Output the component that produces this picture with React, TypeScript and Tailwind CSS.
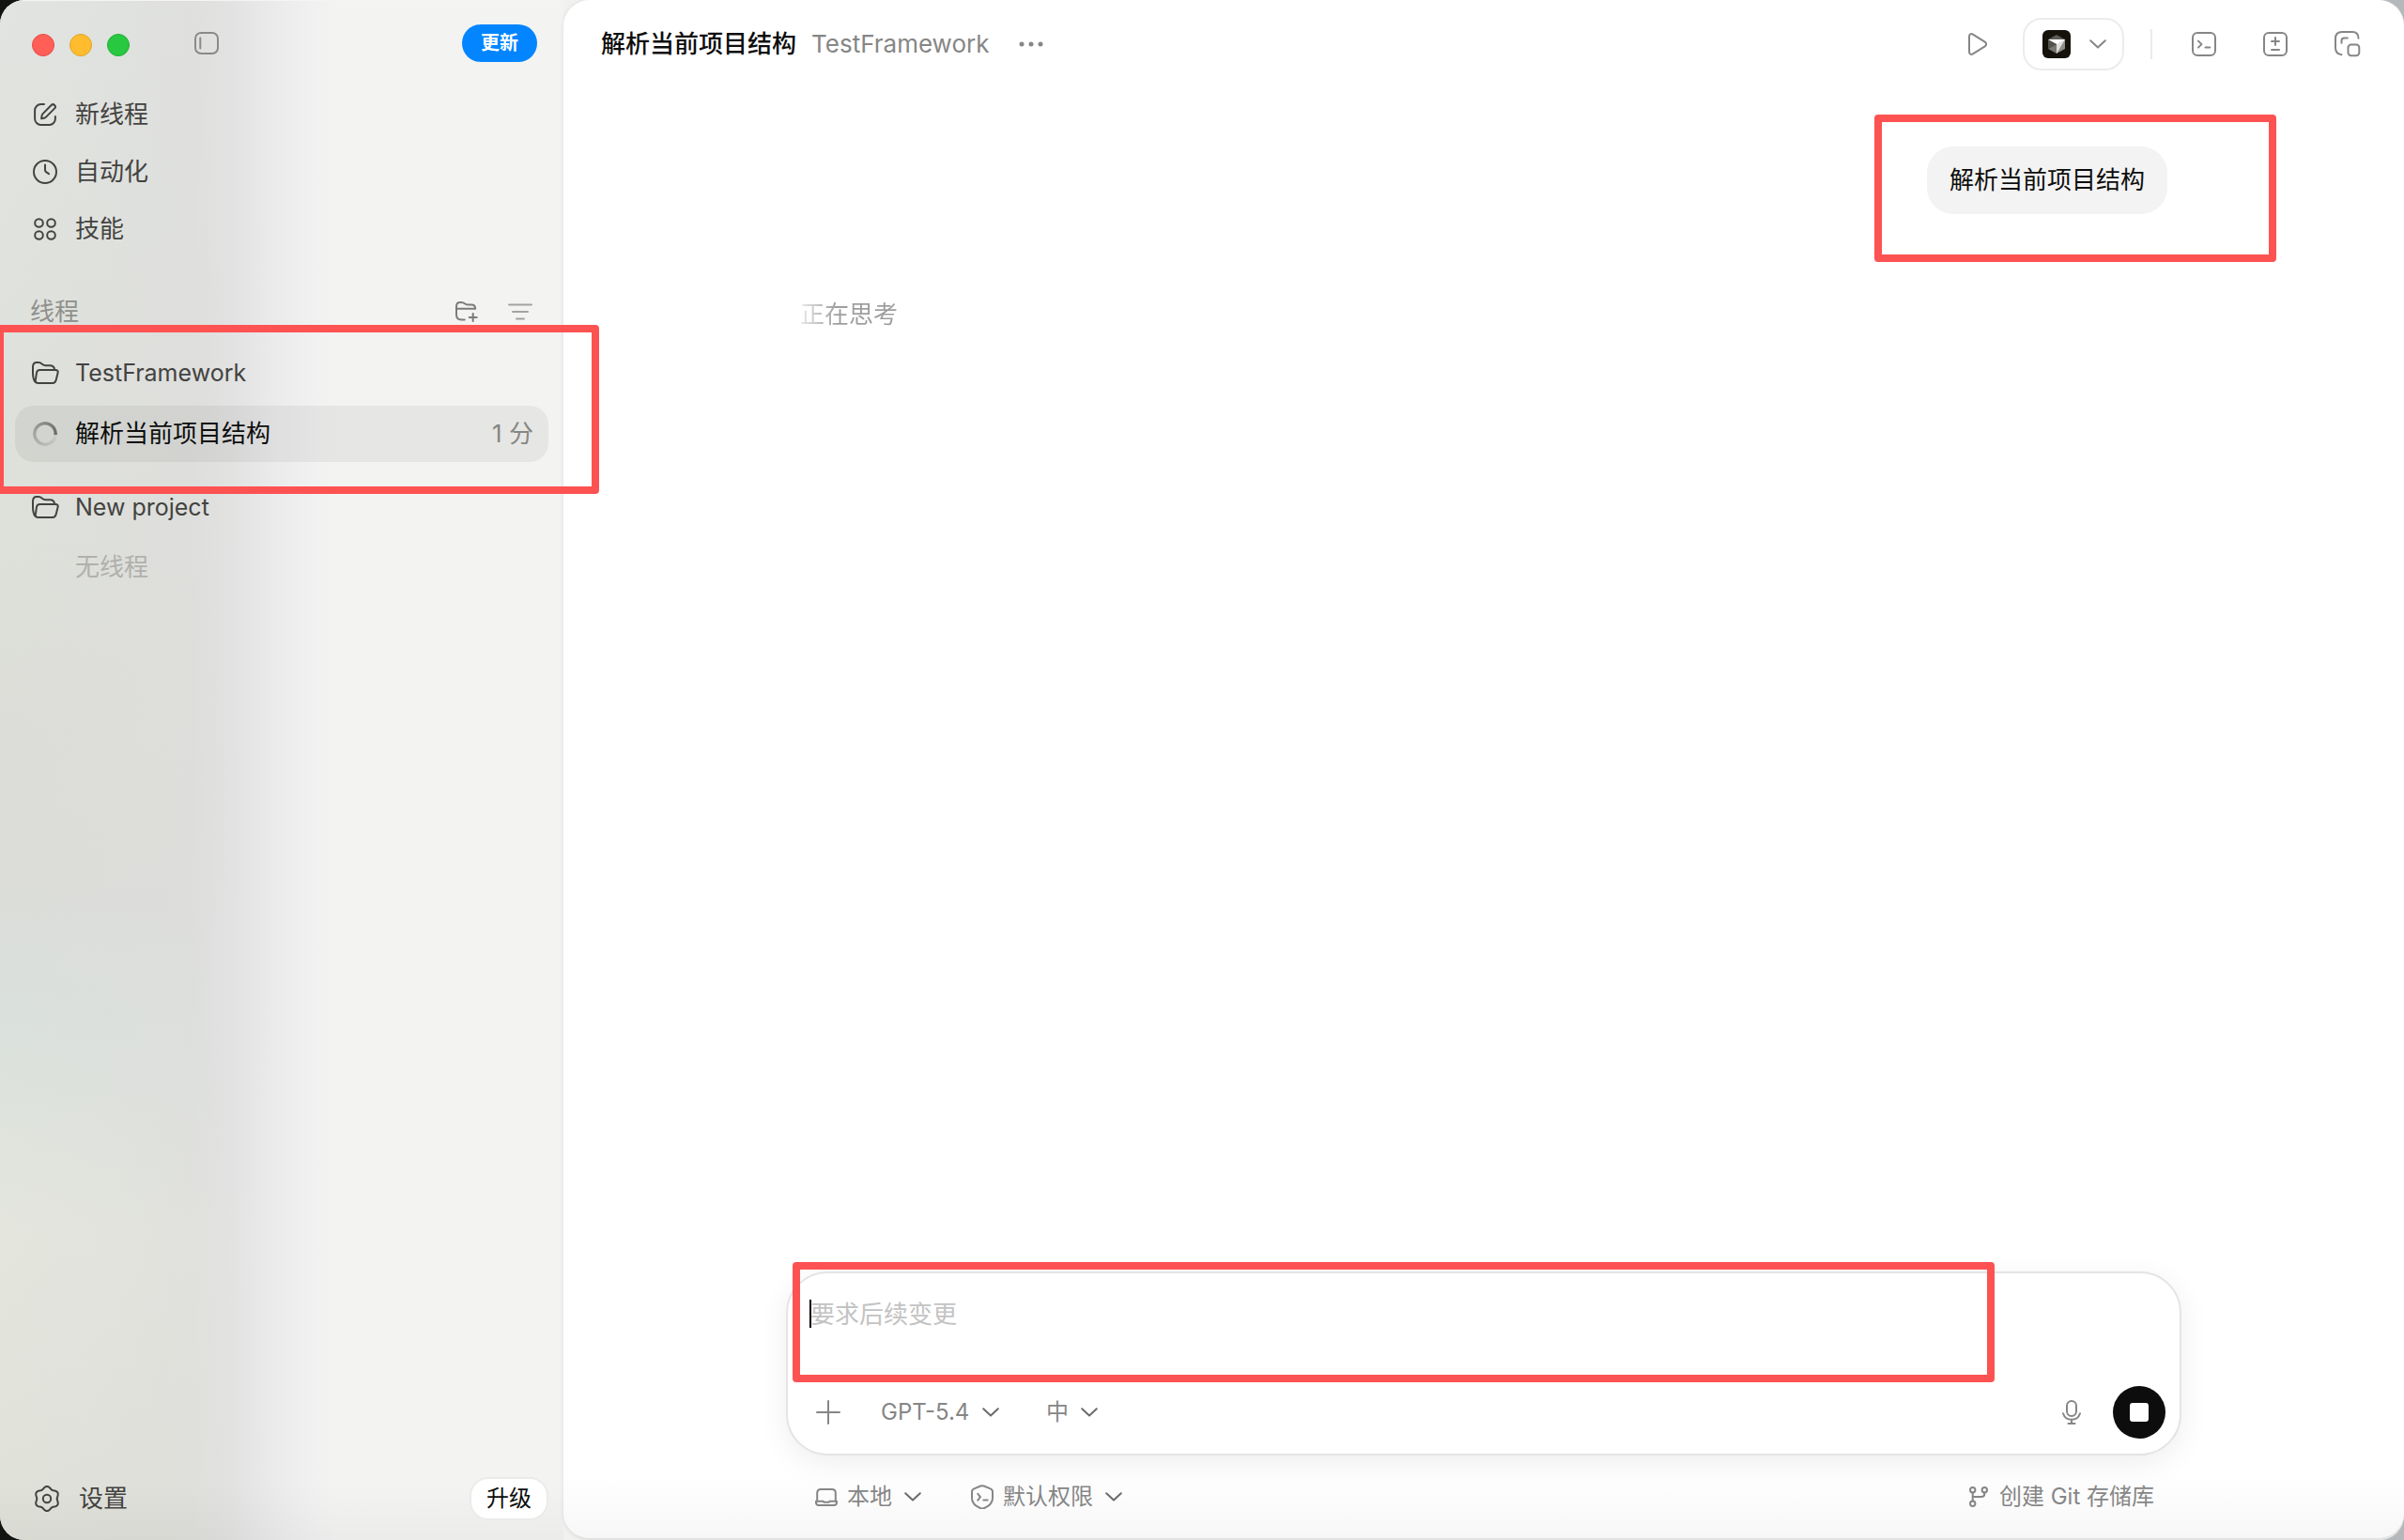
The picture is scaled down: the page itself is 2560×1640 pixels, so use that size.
import type { ReactNode } from "react";

type IconProps = {
  w: number;
  h: number;
  className?: string;
  children: ReactNode;
};

function Icon({ w, h, className = "", children }: IconProps) {
  return (
    <svg
      width={w}
      height={h}
      viewBox={`0 0 ${w} ${h}`}
      fill="none"
      stroke="currentColor"
      strokeWidth={2}
      strokeLinecap="round"
      strokeLinejoin="round"
      aria-hidden="true"
      className={`shrink-0 ${className}`}
    >
      {children}
    </svg>
  );
}

const SidebarIcon = () => (
  <Icon w={26} h={24}>
    <rect x="1" y="1" width="24" height="22" rx="6" />
    <path d="M6.3 6.5v11" />
  </Icon>
);

const ComposeIcon = () => (
  <Icon w={24} h={24}>
    <path d="M11 1.1H7.5A6.4 6.4 0 0 0 1.1 7.5v9A6.4 6.4 0 0 0 7.5 22.9h9a6.4 6.4 0 0 0 6.4-6.4V14" />
    <path d="M8.1 16.2l.5-3.1c.1-.8.5-1.5 1-2L18.6 2a2.4 2.4 0 0 1 3.6 3.4l-9.2 9.2c-.6.6-1.3 1-2.1 1.1z" />
  </Icon>
);

const ClockIcon = () => (
  <Icon w={26} h={26}>
    <circle cx="13" cy="13" r="12" />
    <path d="M13 5.6V11c0 1 .3 1.600 1.100 2.200l2.900 1.900" />
  </Icon>
);

const SkillsIcon = () => (
  <Icon w={24} h={24}>
    <circle cx="5.500" cy="5.500" r="4.300" />
    <circle cx="18.500" cy="5.500" r="4.300" />
    <circle cx="5.500" cy="18.500" r="4.300" />
    <circle cx="18.500" cy="18.500" r="4.300" />
  </Icon>
);

const FolderOpenIcon = () => (
  <Icon w={29} h={24}>
    <path d="M3.600 21.800C1.700 19.800 1 16 1 12V5.800C1 2.600 2.300 1 5 1h2c1.600 0 2.800.7 3.900 1.700C12 3.700 13 4.200 14.600 4.200h4.600c3 0 4.700 1.500 4.900 4.600" />
    <path d="M8.500 8.900h16.600c2.100 0 3 1.300 2.500 3.200l-2 8c-.5 1.900-1.600 2.900-3.500 2.900H6.700c-2.200 0-3.200-1.100-2.900-3.100l1.200-8c.3-2 1.500-3 3.500-3z" />
  </Icon>
);

const FolderPlusIcon = () => (
  <Icon w={24} h={22}>
    <path d="M9.700 19.500H6.500C2.900 19.500 1 17.600 1 14V5.200C1 2.400 2.400 1 5 1h1.300c1.500 0 2.500.5 3.500 1.300s1.900 1.100 3.300 1.100h3.700c3 0 4.400 1.300 4.400 4.300H1.500" />
    <path d="M18.700 13v8M14.700 17h8" />
  </Icon>
);

const FilterIcon = () => (
  <Icon w={26} h={18}>
    <path d="M1 1.500h24M5 9h16M9 16.500h8" />
  </Icon>
);

const gearPath = Array.from({ length: 120 }, (_, i) => {
  const a = (i / 120) * Math.PI * 2;
  const r = 11.9 - 1.2 * Math.cos(6 * a);
  const x = (14 + r * Math.cos(a)).toFixed(2);
  const y = (14 + r * Math.sin(a)).toFixed(2);
  return `${i === 0 ? "M" : "L"}${x} ${y}`;
}).join("");

const GearIcon = () => (
  <Icon w={28} h={28}>
    <path d={`${gearPath}Z`} />
    <circle cx="14" cy="14" r="4.200" />
  </Icon>
);

const ChevronDown = ({ className = "" }: { className?: string }) => (
  <Icon w={18} h={10} className={className}>
    <path d="M1.200 1.200 9 8.600l7.800-7.400" />
  </Icon>
);

const PlayIcon = () => (
  <Icon w={20} h={24}>
    <path d="M1 3.800C1 1.500 2.900.4 4.900 1.600l12.800 8.100c1.800 1.100 1.800 3.500 0 4.600L4.900 22.400C2.900 23.600 1 22.500 1 20.200z" />
  </Icon>
);

const EditorLogo = () => (
  <svg width="30" height="30" viewBox="0 0 30 30" aria-hidden="true" className="shrink-0">
    <rect width="30" height="30" rx="6" fill="#14120b" />
    <path d="M15 5l9 5H6z" fill="#5c5b57" />
    <path d="M6 10l9 5-9 5z" fill="#54534e" />
    <path d="M6 20l9-5v10z" fill="#77766f" />
    <path d="M24 10v10l-9 5z" fill="#8f8e8a" />
    <path d="M6 10h18l-9 15V15z" fill="#ffffff" />
    <path d="M24 10l-9 15V15z" fill="#dededb" />
  </svg>
);

const TerminalIcon = () => (
  <Icon w={26} h={26}>
    <rect x="1" y="1" width="24" height="24" rx="5" />
    <path d="M6.900 9.600l3.600 3.500-3.600 3.500M14.500 16.500h4.800" />
  </Icon>
);

const DiffIcon = () => (
  <Icon w={26} h={26}>
    <rect x="1" y="1" width="24" height="24" rx="5" />
    <path d="M13 6v8M9 10h8M9 19h8" />
  </Icon>
);

const PopOutIcon = () => (
  <Icon w={28} h={28}>
    <path d="M25.500 7.800C25.500 3.600 23.200 1 19 1H8C3.500 1 1 3.500 1 8v10c0 4.300 2.300 6.700 6.500 7.200" />
    <path d="M7.500 12.700v-2.200c0-2 1-3 3-3h3.300" />
    <rect x="14.500" y="14.500" width="11.800" height="11.800" rx="3.200" />
  </Icon>
);

const PlusIcon = () => (
  <Icon w={26} h={26}>
    <path d="M13 1v24M1 13h24" />
  </Icon>
);

const MicIcon = () => (
  <Icon w={20} h={26}>
    <rect x="5" y="1" width="10" height="16" rx="5" />
    <path d="M1 14.200c1.300 4 4.700 6.600 9 6.600s7.700-2.600 9-6.600M10 21v4M6.500 25h7" />
  </Icon>
);

const LaptopIcon = () => (
  <Icon w={24} h={19}>
    <path d="M2.200 13.500V5c0-2.600 1.300-4 4-4h11.600c2.700 0 4 1.400 4 4v8.500" />
    <path d="M1 13.700h7.500l1 1h5l1-1H23v1.300c0 1.900-1 3-3 3H4c-2 0-3-1.100-3-3z" />
  </Icon>
);

const ShieldIcon = () => (
  <Icon w={24} h={26}>
    <path d="M10.300 1.500a4.600 4.600 0 0 1 3.400 0l7 2.900c1.500.6 2.300 1.700 2.300 3.300V14c0 3.800-1.500 6.600-4.600 8.600l-3.400 2a5.500 5.500 0 0 1-6 0l-3.400-2C2.500 20.600 1 17.800 1 14V7.700c0-1.600.8-2.700 2.300-3.300z" />
    <path d="M7.300 9.800l2.700 3.400-2.700 3.400M13.300 16.500h4.300" />
  </Icon>
);

const BranchIcon = () => (
  <Icon w={20} h={22}>
    <circle cx="3.700" cy="3.700" r="2.700" />
    <circle cx="16.300" cy="3.700" r="2.700" />
    <circle cx="3.700" cy="18.300" r="2.700" />
    <path d="M3.700 6.400v9.200M16.300 6.400v1.300c0 2.200-1.200 3.400-3.400 3.400H3.700" />
  </Icon>
);

function Highlight({ className }: { className: string }) {
  return (
    <span
      aria-hidden="true"
      className={`pointer-events-none absolute z-10 rounded-[4px] border-8 border-[#fd5252] ${className}`}
    />
  );
}

function Picker({ label, value, icon }: { label: string; value: string; icon?: ReactNode }) {
  return (
    <div className="flex items-center gap-[10px]">
      {icon}
      <span className="relative flex items-center">
        <select
          aria-label={label}
          defaultValue={value}
          className="h-10 appearance-none bg-transparent pr-[31px] outline-none"
        >
          <option>{value}</option>
        </select>
        <ChevronDown className="pointer-events-none absolute right-0 text-[#6b6b6b]" />
      </span>
    </div>
  );
}

function NavRow({ icon, label, className }: { icon: ReactNode; label: string; className: string }) {
  return (
    <button type="button" className={`flex w-full items-center gap-4 text-left ${className}`}>
      <span className="flex w-12 justify-end">
        <span className="flex w-8 justify-center">{icon}</span>
      </span>
      {label}
    </button>
  );
}

function Sidebar() {
  return (
    <aside className="flex w-[600px] shrink-0 flex-col border-t border-[#f4f5f3] bg-[linear-gradient(to_bottom,transparent_calc(100%-60px),rgba(0,0,0,0.03)),linear-gradient(to_right,transparent,rgba(222,222,221,0.6)_34%,rgba(226,226,226,0.9)_41%,#ebebec_49%,#f1f1f2_56%,#f3f3f1_60%),linear-gradient(to_bottom,#e1e4e0,#dddfd9_38%,#dcdcd8_55%,#dae0dc_66%,#e4e6dd_80%,#dfe0d7)] text-[#434341]">
      <div className="flex h-[90px] shrink-0 items-start pt-[25px] pr-7 pl-[34px]">
        <div className="flex h-11 items-center gap-4">
          <button type="button" aria-label="关闭" className="size-6 rounded-full border border-[#ea4a44] bg-[#ff5f57]" />
          <button type="button" aria-label="最小化" className="size-6 rounded-full border border-[#e3a428] bg-[#febc2e]" />
          <button type="button" aria-label="缩放" className="size-6 rounded-full border border-[#1fb034] bg-[#28c840]" />
        </div>
        <button type="button" aria-label="切换边栏" className="ml-[69px] flex h-10 items-center text-[#8a8a87]">
          <SidebarIcon />
        </button>
        <button type="button" className="ml-auto h-10 rounded-full bg-[#0285ff] px-5 text-[20px] leading-10 font-bold text-white">
          更新
        </button>
      </div>

      <nav className="shrink-0 px-4">
        <NavRow icon={<ComposeIcon />} label="新线程" className="h-[61px]" />
        <NavRow icon={<ClockIcon />} label="自动化" className="h-[61px]" />
        <NavRow icon={<SkillsIcon />} label="技能" className="h-[61px]" />
      </nav>

      <div className="mt-7 flex h-[60px] shrink-0 items-center pr-[33px] pl-8 text-[#8f908d]">
        <h2>线程</h2>
        <button type="button" aria-label="添加项目" className="ml-auto text-[#7b7b79]">
          <FolderPlusIcon />
        </button>
        <button type="button" aria-label="筛选线程" className="ml-8 text-[#a2a2a0]">
          <FilterIcon />
        </button>
      </div>

      <section className="relative mt-1 shrink-0 px-4">
        <NavRow icon={<FolderOpenIcon />} label="TestFramework" className="h-[61px] text-[25px]" />
        <button
          type="button"
          className="mt-[5px] flex h-[60px] w-full items-center gap-4 rounded-[20px] bg-black/5 pr-4 text-left text-[#0d0d0d]"
        >
          <span className="flex w-12 justify-end">
            <span className="mr-[3px] size-[26px] rounded-full bg-[conic-gradient(from_95deg,rgba(0,0,0,0.03),rgba(0,0,0,0.22)_50%,rgba(0,0,0,0.5))] [mask:radial-gradient(circle,transparent_9px,black_10px)]" />
          </span>
          <span>解析当前项目结构</span>
          <span className="ml-auto text-[#868684]">1 分</span>
        </button>
        <Highlight className="-top-5 -right-[38px] -bottom-[34px] -left-1" />
      </section>

      <section className="mt-[17px] shrink-0 px-4">
        <NavRow icon={<FolderOpenIcon />} label="New project" className="h-[61px] text-[25px]" />
        <p className="mt-[2px] flex h-16 items-center pl-16 text-[#b0b0ad]">无线程</p>
      </section>

      <footer className="mt-auto flex h-[88px] shrink-0 items-center pr-4 pl-9">
        <button type="button" className="flex items-center gap-5">
          <GearIcon />
          设置
        </button>
        <button
          type="button"
          className="ml-auto h-[46px] rounded-[20px] border-2 border-[#ebebea] bg-white px-4 text-[24px] leading-[42px] text-[#0d0d0d]"
        >
          升级
        </button>
      </footer>
    </aside>
  );
}

function Header() {
  return (
    <header className="flex h-[93px] shrink-0 items-center pr-[46px] pl-10 text-[#868686]">
      <h1 className="font-medium text-[#0d0d0d]">解析当前项目结构</h1>
      <span className="ml-4">TestFramework</span>
      <button type="button" aria-label="更多" className="ml-8">
        <svg width="26" height="6" viewBox="0 0 26 6" fill="currentColor" aria-hidden="true">
          <circle cx="3" cy="3" r="2.500" />
          <circle cx="13" cy="3" r="2.500" />
          <circle cx="23" cy="3" r="2.500" />
        </svg>
      </button>
      <button type="button" aria-label="运行" className="ml-auto">
        <PlayIcon />
      </button>
      <button
        type="button"
        aria-label="打开方式"
        className="ml-[38px] flex h-14 w-[108px] items-center justify-between rounded-[20px] border-2 border-[#ececec] pr-[17px] pl-[19px]"
      >
        <EditorLogo />
        <ChevronDown />
      </button>
      <span className="mx-7 h-8 w-[2px] bg-[#ebebeb]" />
      <div className="ml-[14px] flex items-center gap-[50px]">
        <button type="button" aria-label="终端">
          <TerminalIcon />
        </button>
        <button type="button" aria-label="更改">
          <DiffIcon />
        </button>
        <button type="button" aria-label="弹出窗口">
          <PopOutIcon />
        </button>
      </div>
    </header>
  );
}

function Conversation() {
  return (
    <section className="mx-auto flex w-full max-w-[1456px] flex-1 flex-col pt-[63px]">
      <div className="relative self-end rounded-[28px] bg-[#f3f3f3] px-6 py-4 text-[#0d0d0d]">
        <p className="leading-10">解析当前项目结构</p>
        <Highlight className="-top-[34px] -right-[116px] -bottom-[51px] -left-14" />
      </div>
      <p className="mt-[87px] w-fit bg-[linear-gradient(to_right,#e9e9e9,#9d9d9d_38%)] bg-clip-text leading-10 text-transparent">
        正在思考
      </p>
    </section>
  );
}

function Composer() {
  return (
    <form className="mx-auto w-full max-w-[1486px] shrink-0">
      <div className="rounded-[44px] border-2 border-[#e4e4e4] bg-white shadow-[0_8px_32px_rgba(0,0,0,0.07)]">
        <div className="relative mr-[200px] h-[116px] pt-6 pl-6">
          <textarea
            aria-label="消息"
            rows={1}
            placeholder="要求后续变更"
            className="block h-10 w-full resize-none bg-transparent leading-10 text-[#0d0d0d] outline-none placeholder:text-[#c3c3c3]"
          />
          <span aria-hidden="true" className="absolute top-7 left-[23px] h-[30px] w-[2px] bg-black" />
          <Highlight className="-top-3 -right-[3px] bottom-0 left-[5px]" />
        </div>
        <div className="flex h-[76px] items-center pr-[15px] pb-3 pl-[30px] text-[24px] text-[#868686]">
          <button type="button" aria-label="添加">
            <PlusIcon />
          </button>
          <div className="ml-[43px] flex gap-[50px]">
            <Picker label="模型" value="GPT-5.4" />
            <Picker label="推理强度" value="中" />
          </div>
          <button type="button" aria-label="语音输入" className="ml-auto">
            <MicIcon />
          </button>
          <button
            type="button"
            aria-label="停止"
            className="ml-[34px] flex size-14 items-center justify-center rounded-full bg-[#0d0d0d]"
          >
            <span className="size-5 rounded-[3px] bg-white" />
          </button>
        </div>
      </div>
      <div className="flex h-[88px] items-center pr-[29px] pl-[31px] text-[24px] text-[#868686]">
        <Picker label="运行位置" value="本地" icon={<LaptopIcon />} />
        <div className="ml-[53px]">
          <Picker label="权限" value="默认权限" icon={<ShieldIcon />} />
        </div>
        <button type="button" className="ml-auto flex items-center gap-3">
          <BranchIcon />
          创建 Git 存储库
        </button>
      </div>
    </form>
  );
}

export default function App() {
  return (
    <div className="h-screen bg-[linear-gradient(to_right,#111411,#10200c_30%,#c3c8ce_70%,#b4b8ba)] font-['Inter','Noto_Sans_CJK_SC',sans-serif] text-[26px] leading-10">
      <div className="flex h-full overflow-hidden rounded-[26px] bg-[#f1f1f0]">
        <Sidebar />
        <main className="flex min-w-0 flex-1 flex-col rounded-[28px] border-b-2 border-[#e2e2e2] bg-[linear-gradient(to_bottom,#ffffff_calc(100%-70px),#f7f7f7)] shadow-[0_0_4px_rgba(0,0,0,0.1)]">
          <Header />
          <Conversation />
          <Composer />
        </main>
      </div>
    </div>
  );
}
